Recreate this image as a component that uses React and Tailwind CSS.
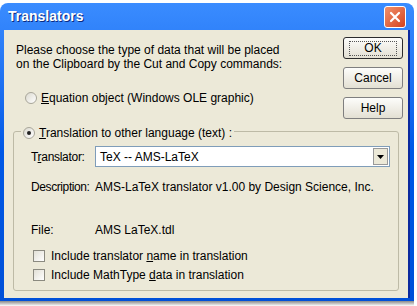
const font = { fontFamily: '"Liberation Sans", Arial, sans-serif' };

function XpButton({ children, focused }) {
  return (
    <div
      className={
        "flex h-[22px] w-[60px] items-center justify-center rounded-[3px] border bg-gradient-to-b from-[#fdfdfb] to-[#e3e0d3] text-[12px] text-black " +
        (focused ? "border-[#2b2b2b]" : "border-[#7f7f7f]")
      }
    >
      <span className={focused ? "border border-dotted border-[#555] px-[14px] leading-[13px]" : ""}>
        {children}
      </span>
    </div>
  );
}

function Radio({ checked }) {
  return (
    <div className="flex h-[12px] w-[12px] items-center justify-center rounded-full border border-[#a8a69a] bg-gradient-to-br from-[#dcdad0] to-white">
      {checked && <div className="h-[4px] w-[4px] rounded-full bg-[#222]" />}
    </div>
  );
}

function Checkbox() {
  return <div className="h-[12px] w-[12px] border border-[#8b8a80] bg-gradient-to-br from-[#e2e0d6] to-white" />;
}

export default function App() {
  return (
    <div className="flex h-[306px] w-[417px] flex-col bg-white" style={font}>
      <div className="mt-[3px] flex h-[298px] w-[414px] flex-col rounded-t-[8px] bg-gradient-to-b from-[#3a8cff] via-[#0058e6] to-[#0050d8]">
        {/* title bar */}
        <div className="flex h-[27px] shrink-0 items-center pl-[8px] pr-[8px]">
          <span className="text-[14px] font-bold text-white [text-shadow:1px_1px_0_#0a2a80]">Translators</span>
          <div className="ml-auto flex h-[22px] w-[22px] items-center justify-center rounded-[3px] border border-white bg-gradient-to-br from-[#f0906a] to-[#d4401c]">
            <svg width="12" height="12" viewBox="0 0 12 12">
              <path d="M2 2 L10 10 M10 2 L2 10" stroke="white" strokeWidth="2.2" strokeLinecap="round" />
            </svg>
          </div>
        </div>
        {/* body */}
        <div className="mx-[4px] mb-[3px] flex flex-1 flex-col border-r-[2px] border-[#0b2a9e] bg-[#ece9d8] text-[12px] text-black">
          <div className="flex">
            <div className="flex-1 pl-[12px] pt-[13px]">
              <p className="leading-[14px]">Please choose the type of data that will be placed</p>
              <p className="leading-[14px]">on the Clipboard by the Cut and Copy commands:</p>
              <div className="mt-[18px] flex items-center gap-[4px] pl-[9px]">
                <Radio />
                <span>
                  <u>E</u>quation object (Windows OLE graphic)
                </span>
              </div>
            </div>
            <div className="flex flex-col gap-[8px] pr-[5px] pt-[7px]">
              <XpButton focused>OK</XpButton>
              <XpButton>Cancel</XpButton>
              <XpButton>Help</XpButton>
            </div>
          </div>
          {/* group box */}
          <div className="relative mx-[9px] mt-[12px] h-[160px] shrink-0 rounded-[3px] border border-[#bdbaa6]">
            <div className="absolute -top-[8px] left-[7px] flex items-center gap-[4px] bg-[#ece9d8] px-[2px]">
              <Radio checked />
              <span>
                <u>T</u>ranslation to other language (text) :
              </span>
            </div>
            <div className="flex flex-col pl-[17px] pr-[8px] pt-[14px]">
              <div className="flex items-center">
                <span className="w-[64px] tracking-[-0.3px]">
                  T<u>r</u>anslator:
                </span>
                <div className="flex h-[21px] flex-1 items-center border border-[#7f9db9] bg-white pl-[4px]">
                  <span className="flex-1">TeX -- AMS-LaTeX</span>
                  <div className="mr-[1px] flex h-[17px] w-[15px] items-center justify-center border border-[#999] bg-[#ece9d8]">
                    <svg width="7" height="4" viewBox="0 0 7 4">
                      <path d="M0 0 H7 L3.5 4 Z" fill="black" />
                    </svg>
                  </div>
                </div>
              </div>
              <div className="mt-[11px] flex">
                <span className="w-[64px] tracking-[-0.4px]">Description:</span>
                <span>AMS-LaTeX translator v1.00 by Design Science, Inc.</span>
              </div>
              <div className="mt-[25px] flex">
                <span className="w-[64px]">File:</span>
                <span>AMS LaTeX.tdl</span>
              </div>
              <div className="mt-[8px] flex items-center gap-[6px] pl-[2px]">
                <Checkbox />
                <span>
                  Include translator <u>n</u>ame in translation
                </span>
              </div>
              <div className="mt-[1px] flex items-center gap-[6px] pl-[2px]">
                <Checkbox />
                <span>
                  Include MathType <u>d</u>ata in translation
                </span>
              </div>
            </div>
          </div>
        </div>
      </div>
      <div className="h-[5px] w-[414px] bg-gradient-to-b from-[#8a8a8a] to-white" />
    </div>
  );
}
